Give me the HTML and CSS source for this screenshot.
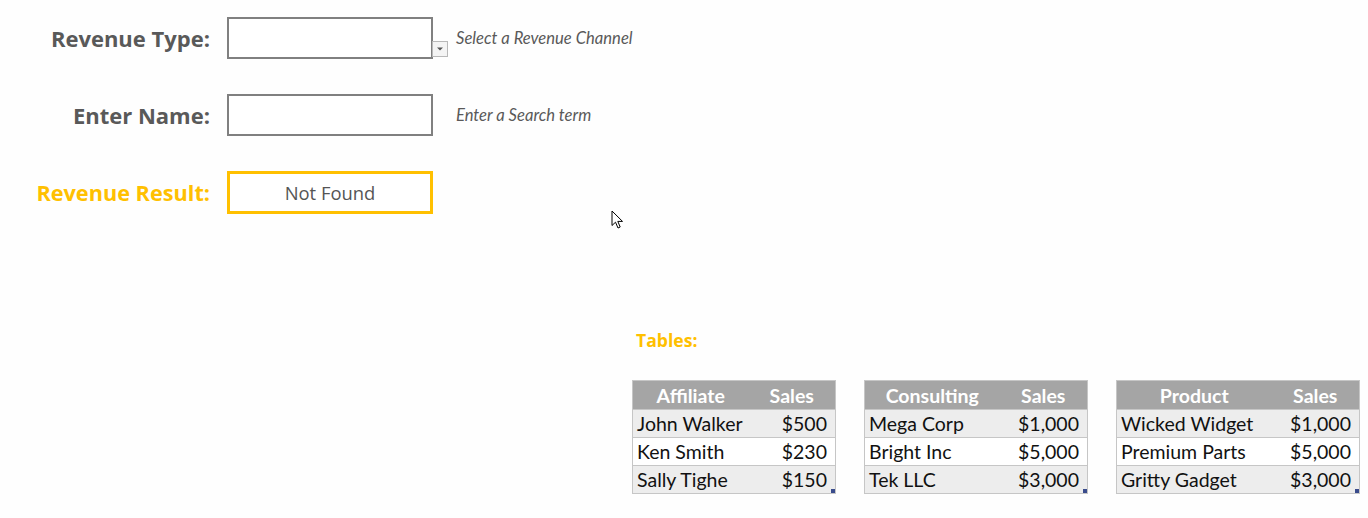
FILE: index.html
```html
<!DOCTYPE html>
<html lang="en">
<head>
    <meta charset="UTF-8">
    <title>Revenue Lookup</title>
    <link rel="stylesheet" href="styles.css">
</head>
<body>
    <div class="lookup">
        <div class="label">Revenue Type:</div>
        <div class="field">
            <div class="box"></div>
            <div class="dropdown">
                <svg width="10" height="6" viewBox="0 0 10 6"><path d="M2 1.5 L8 1.5 L5 4.5 Z" fill="#555"/></svg>
            </div>
        </div>
        <div class="hint">Select a Revenue Channel</div>

        <div class="label">Enter Name:</div>
        <div class="field"><div class="box"></div></div>
        <div class="hint">Enter a Search term</div>

        <div class="label result-label">Revenue Result:</div>
        <div class="field"><div class="box result-box">Not Found</div></div>
        <div></div>
    </div>

    <svg class="cursor" width="13" height="20" viewBox="0 0 13 20">
        <path d="M1 1 L1 15.5 L4.5 12.2 L7 18 L9.2 17 L6.8 11.4 L11.5 11.4 Z" fill="#fff" stroke="#000" stroke-width="1" stroke-linejoin="round"/>
    </svg>

    <div class="tables-section">
        <div class="tables-title">Tables:</div>
        <div class="tables">
            <table class="sheet">
                <colgroup><col style="width:116px"><col style="width:87px"></colgroup>
                <tr><th>Affiliate</th><th>Sales</th></tr>
                <tr><td>John Walker</td><td class="num">$500</td></tr>
                <tr><td>Ken Smith</td><td class="num">$230</td></tr>
                <tr><td>Sally Tighe</td><td class="num">$150<span class="handle"></span></td></tr>
            </table>
            <table class="sheet">
                <colgroup><col style="width:135px"><col style="width:88px"></colgroup>
                <tr><th>Consulting</th><th>Sales</th></tr>
                <tr><td>Mega Corp</td><td class="num">$1,000</td></tr>
                <tr><td>Bright Inc</td><td class="num">$5,000</td></tr>
                <tr><td>Tek LLC</td><td class="num">$3,000<span class="handle"></span></td></tr>
            </table>
            <table class="sheet">
                <colgroup><col style="width:155px"><col style="width:88px"></colgroup>
                <tr><th>Product</th><th>Sales</th></tr>
                <tr><td>Wicked Widget</td><td class="num">$1,000</td></tr>
                <tr><td>Premium Parts</td><td class="num">$5,000</td></tr>
                <tr><td>Gritty Gadget</td><td class="num">$3,000<span class="handle"></span></td></tr>
            </table>
        </div>
    </div>
</body>
</html>
```

FILE: styles.css
```css
body {
    margin: 0;
    background-color: #fefefe;
    font-family: "Open Sans", Arial, sans-serif;
    color: #595959;
    position: relative;
    height: 518px;
    overflow: hidden;
}
.lookup {
    display: grid;
    grid-template-columns: 210px 206px auto;
    grid-template-rows: 42px 42px 43px;
    column-gap: 17px;
    row-gap: 35px;
    padding-top: 17px;
    align-items: center;
}
.label {
    text-align: right;
    font-weight: bold;
    font-size: 22px;
    color: #595959;
}
.result-label {
    color: #ffc000;
    font-size: 21.7px;
}
.field {
    position: relative;
    height: 100%;
}
.box {
    box-sizing: border-box;
    height: 100%;
    border: 2px solid #808080;
    background-color: #fff;
}
.result-box {
    border: 3px solid #ffc000;
    display: flex;
    align-items: center;
    justify-content: center;
    font-size: 18.4px;
    color: #555;
}
.dropdown {
    position: absolute;
    left: 205px;
    top: 24px;
    width: 16px;
    height: 16px;
    box-sizing: border-box;
    border: 1px solid #b8b8b8;
    background-color: #f4f4f4;
    display: flex;
    align-items: center;
    justify-content: center;
}
.hint {
    font-family: Lato, "Open Sans", sans-serif;
    font-style: italic;
    font-size: 16.6px;
    color: #595959;
    padding-left: 6px;
}
.cursor {
    position: absolute;
    left: 611px;
    top: 210px;
}
.tables-section {
    margin-top: 114px;
    padding-left: 632px;
}
.tables-title {
    font-weight: bold;
    font-size: 17.6px;
    color: #ffc000;
    padding-left: 4px;
    height: 24px;
}
.tables {
    display: flex;
    gap: 28px;
    margin-top: 28px;
}
.sheet {
    border-collapse: collapse;
    table-layout: fixed;
    font-family: Lato, "Open Sans", sans-serif;
    font-size: 19.5px;
    color: #111;
    border: 1px solid #c6c6c6;
}
.sheet th {
    background-color: #a5a5a5;
    color: #fff;
    font-weight: bold;
    height: 28px;
    padding: 0;
    text-align: center;
}
.sheet td {
    height: 27px;
    padding: 0 4px;
    border-top: 1px solid #c6c6c6;
    background-color: #ededed;
    position: relative;
}
.sheet tr:nth-child(3) td {
    background-color: #fff;
}
.sheet td.num {
    text-align: right;
    padding-right: 8px;
}
.handle {
    position: absolute;
    right: 0;
    bottom: 0;
    width: 4px;
    height: 4px;
    background-color: #3a4c8c;
}
```
